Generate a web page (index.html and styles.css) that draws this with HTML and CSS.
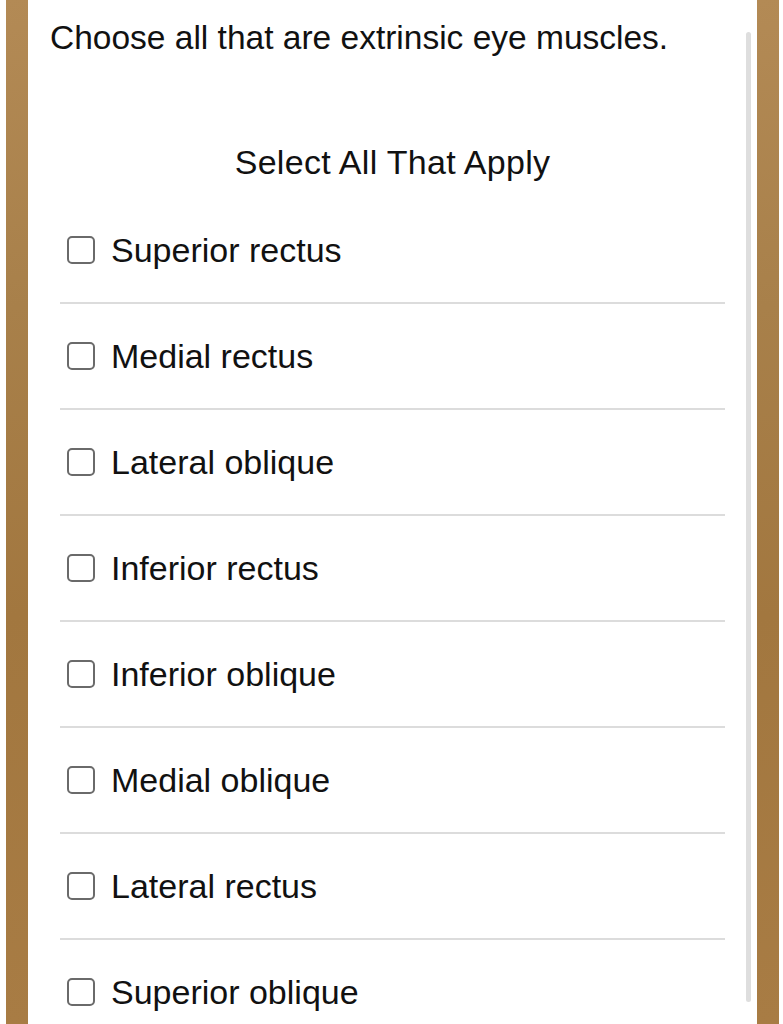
FILE: index.html
```html
<!DOCTYPE html>
<html>
<head>
     <title>Quiz</title>
     <link rel="stylesheet" href="styles.css">
</head>
<body>
     <div class="frame">
          <div class="wood"></div>

          <div class="card">
               <p class="question">Choose all that are extrinsic eye muscles.</p>
               <p class="hint">Select All That Apply</p>

               <ul class="choices">
                    <li><span class="box"></span>Superior rectus</li>
                    <li><span class="box"></span>Medial rectus</li>
                    <li><span class="box"></span>Lateral oblique</li>
                    <li><span class="box"></span>Inferior rectus</li>
                    <li><span class="box"></span>Inferior oblique</li>
                    <li><span class="box"></span>Medial oblique</li>
                    <li><span class="box"></span>Lateral rectus</li>
                    <li><span class="box"></span>Superior oblique</li>
               </ul>

               <div class="scroll"></div>
          </div>

          <div class="wood"></div>
     </div>
</body>
</html>
```

FILE: styles.css
```css
body {
     margin: 0;
     background-color: #fff;
     font-family: "Liberation Sans", Arial, sans-serif;
     color: #111;
     overflow: hidden;
}

.frame {
     display: flex;
     height: 1024px;
     padding-left: 6px;
     padding-right: 4px;
}

.wood {
     width: 22px;
     flex-shrink: 0;
     background: linear-gradient(170deg, #b38a55 0%, #a8804a 30%, #a2773f 60%, #a87c44 100%);
}

.card {
     flex: 1;
     position: relative;
     background-color: #fff;
     overflow: hidden;
}

p.question {
     margin: 18px 0 0 22px;
     font-size: 33.5px;
     line-height: 40px;
}

p.hint {
     margin: 84px 0 0 0;
     text-align: center;
     font-size: 34px;
     line-height: 40px;
     letter-spacing: 0.3px;
}

ul.choices {
     list-style: none;
     margin: 16px 32px 0 32px;
     padding: 0;
}

ul.choices li {
     display: flex;
     align-items: center;
     height: 104px;
     padding-left: 7px;
     border-bottom: 2px solid #dcdcdc;
     font-size: 34px;
}

ul.choices li:last-child {
     border-bottom: none;
}

span.box {
     width: 24px;
     height: 24px;
     margin-right: 16px;
     border: 2px solid #6a6a6a;
     border-radius: 5px;
     flex-shrink: 0;
}

.scroll {
     position: absolute;
     top: 32px;
     bottom: 22px;
     right: 6px;
     width: 5px;
     border-radius: 3px;
     background-color: #dedede;
}
```
